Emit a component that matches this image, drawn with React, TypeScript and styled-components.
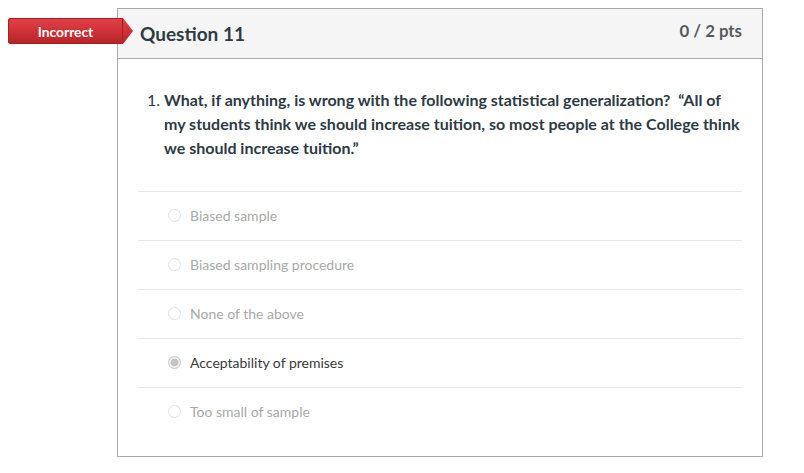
import styled, { createGlobalStyle } from "styled-components";

const GlobalStyle = createGlobalStyle`
  body {
    margin: 0;
    background: #fff;
    font-family: Lato, "Helvetica Neue", Arial, sans-serif;
  }
`;

const answers = [
  { text: "Biased sample", selected: false },
  { text: "Biased sampling procedure", selected: false },
  { text: "None of the above", selected: false },
  { text: "Acceptability of premises", selected: true },
  { text: "Too small of sample", selected: false },
];

const App = (): JSX.Element => {
  return (
    <Page>
      <GlobalStyle />
      <QuestionCard>
        <Badge>Incorrect</Badge>
        <Header>
          <Title>Question 11</Title>
          <Points>0 / 2 pts</Points>
        </Header>
        <Body>
          <QuestionText>
            <Num>1.</Num>
            <span>
              What, if anything, is wrong with the following statistical
              generalization?&nbsp; “All of my students think we should increase
              tuition, so most people at the College think we should increase
              tuition.”
            </span>
          </QuestionText>
          <AnswerList>
            {answers.map((a) => (
              <AnswerRow key={a.text}>
                <Radio $selected={a.selected} />
                <AnswerLabel $selected={a.selected}>{a.text}</AnswerLabel>
              </AnswerRow>
            ))}
          </AnswerList>
        </Body>
      </QuestionCard>
    </Page>
  );
};

export default App;

/* =================================================== */
const Page = styled.div`
  padding: 8px 0 0 117px;
`;

const QuestionCard = styled.div`
  position: relative;
  width: 644px;
  height: 447px;
  border: 1px solid #aaaaaa;
  background: #fff;
`;

const Badge = styled.div`
  position: absolute;
  left: -110px;
  top: 9px;
  width: 115px;
  height: 26px;
  box-sizing: border-box;
  display: flex;
  align-items: center;
  justify-content: center;
  color: #fff;
  font-family: Lato, Arial, sans-serif;
  font-weight: 700;
  font-size: 13.8px;
  background: linear-gradient(#e24147, #b82327);
  border-radius: 3px 0 0 3px;
  box-shadow: inset 0 0 0 1px #a81e22;
  z-index: 2;
  &::after {
    content: "";
    position: absolute;
    right: -10px;
    top: 0;
    width: 10px;
    height: 26px;
    background: linear-gradient(#e24147, #b82327);
    clip-path: polygon(0 0, 100% 50%, 0 100%);
  }
`;

const Header = styled.div`
  height: 50px;
  box-sizing: border-box;
  background: #f5f5f5;
  border-bottom: 1px solid #aaaaaa;
  display: flex;
  justify-content: space-between;
  align-items: flex-start;
  padding: 0 20px 0 22px;
`;

const Title = styled.div`
  margin-top: 13px;
  font-size: 19px;
  font-weight: 700;
  color: #2d3b45;
`;

const Points = styled.div`
  margin-top: 11px;
  font-size: 16.8px;
  font-weight: 700;
  color: #555a5e;
`;

const Body = styled.div`
  padding: 29px 20px 0 20px;
`;

const QuestionText = styled.div`
  display: flex;
  padding: 0 0 31px 9px;
  font-size: 16px;
  line-height: 24px;
  font-weight: 700;
  color: #2d3b45;
`;

const Num = styled.span`
  flex: none;
  width: 17px;
  font-weight: 400;
`;

const AnswerList = styled.div`
  display: flex;
  flex-direction: column;
`;

const AnswerRow = styled.div`
  height: 46px;
  box-sizing: content-box;
  border-top: 1px solid #e8e8e8;
  display: flex;
  align-items: center;
  padding: 0 0 2px 30px;
  gap: 9px;
`;

const Radio = styled.span<{ $selected: boolean }>`
  width: 13px;
  height: 13px;
  box-sizing: border-box;
  border-radius: 50%;
  border: 1px solid ${(p) => (p.$selected ? "#c8c8c8" : "#e0e0e0")};
  background: ${(p) =>
    p.$selected
      ? "radial-gradient(circle, #c4c4c4 0 3.5px, #f0f0f0 4.2px)"
      : "#fff"};
`;

const AnswerLabel = styled.span<{ $selected: boolean }>`
  font-size: 14px;
  color: ${(p) => (p.$selected ? "#3a3a3a" : "#a9a9a9")};
`;
